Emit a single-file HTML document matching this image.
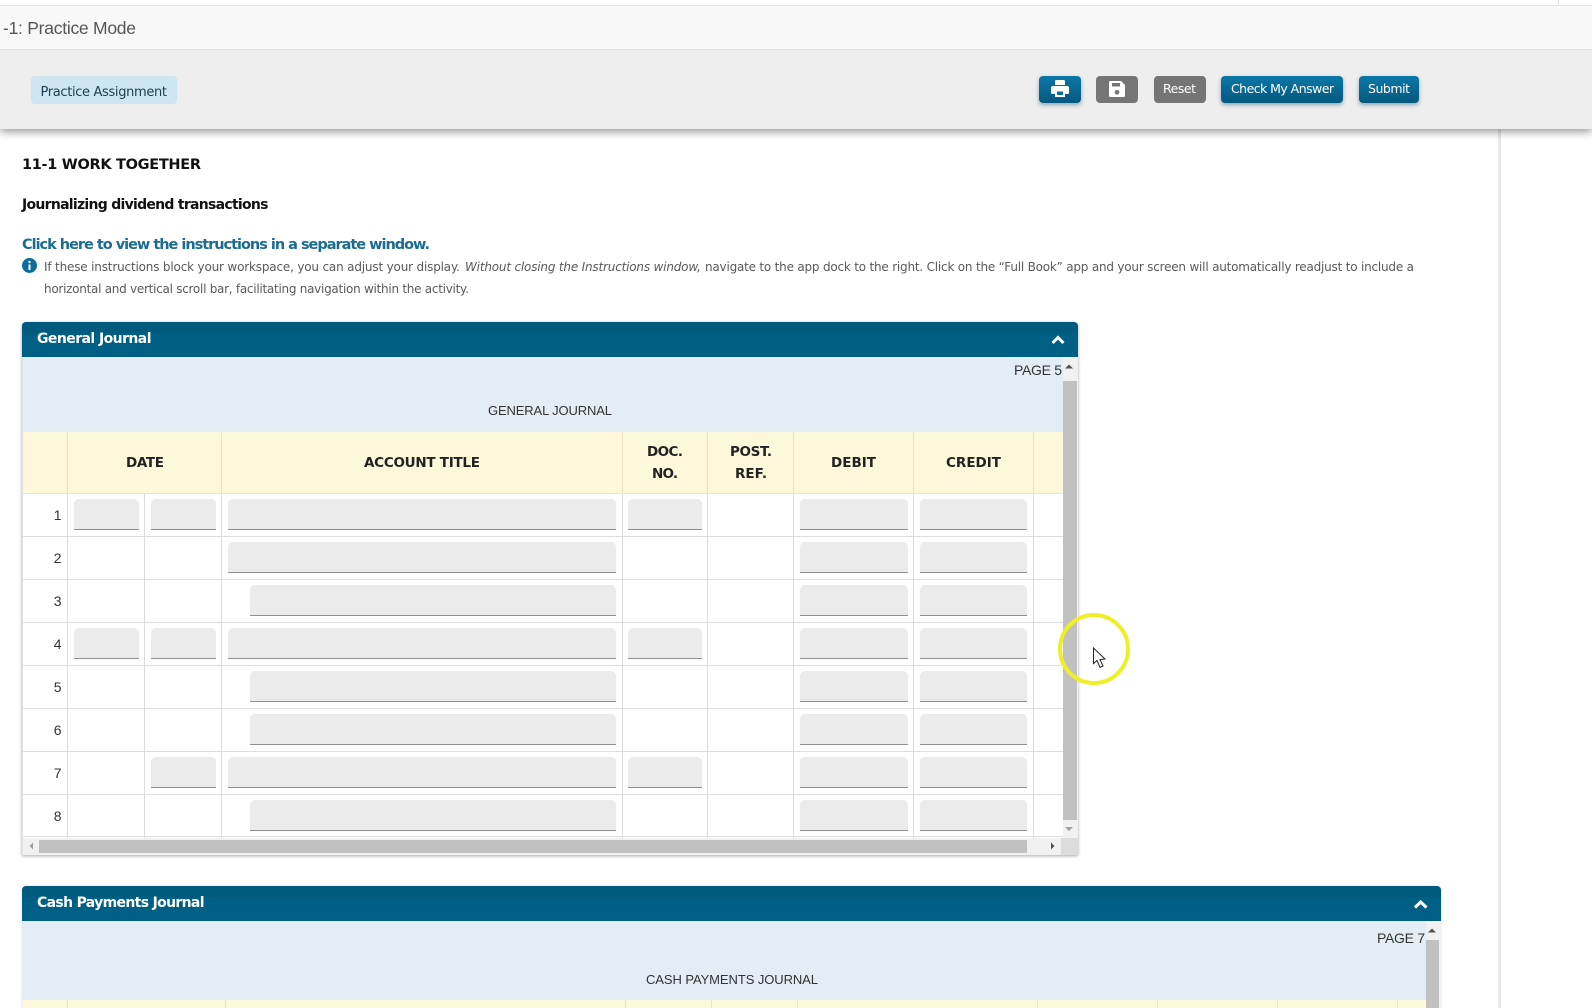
<!DOCTYPE html>
<html lang="en">
<head>
<meta charset="utf-8">
<title>Practice Mode</title>
<style>
html,body{margin:0;padding:0;width:1592px;height:1008px;overflow:hidden;background:#fff}
div{position:absolute;box-sizing:border-box}
.i{background:#ebebeb;height:31px;border-bottom:1px solid #8f8f8f;border-radius:5px 5px 0 0}
.r{height:1px;background:#dedede}
.c{width:1px;background:#dcdcdc}
.y{width:1px;background:#e9e3c2}
.b{top:76px;height:27px;border-radius:4px;background:linear-gradient(#0b78a8,#04587e);box-shadow:0 2px 4px rgba(0,60,90,.4)}
.g{top:76px;height:27px;border-radius:4px;background:#757575}
svg{position:absolute;left:0;top:0}
.s{font-family:"DejaVu Sans",sans-serif}
.sb{font-family:"DejaVu Sans",sans-serif;font-weight:bold}
.l{font-family:"Liberation Sans",sans-serif}
</style>
</head>
<body>
<!-- top bars -->
<div style="left:0;top:5px;width:1592px;height:1px;background:#e6e6e6"></div>
<div style="left:1558px;top:0;width:1px;height:6px;background:#dedede"></div>
<div style="left:0;top:50px;width:1592px;height:79px;background:#eee;box-shadow:0 3px 8px rgba(0,0,0,.4);z-index:3"></div>
<div style="left:0;top:6px;width:1592px;height:44px;background:#f8f8f8;border-bottom:1px solid #e2e2e2;z-index:4"></div>
<div style="left:31px;top:76px;width:146px;height:28px;background:#cde6f2;border-radius:4px;z-index:4"></div>
<div class="b" style="left:1039px;width:42px;z-index:4"></div>
<div class="g" style="left:1096px;width:42px;z-index:4"></div>
<div class="g" style="left:1154px;width:52px;z-index:4"></div>
<div class="b" style="left:1221px;width:122px;z-index:4"></div>
<div class="b" style="left:1359px;width:60px;z-index:4"></div>
<!-- right page edge -->
<div style="left:1498px;top:129px;width:3px;height:879px;background:#e8e8e8"></div>
<!-- General Journal panel -->
<div style="left:22px;top:322px;width:1056px;height:533px;background:#fff;box-shadow:0 1px 3px rgba(0,0,0,.35);border-radius:4px 4px 0 0"></div>
<div style="left:22px;top:322px;width:1056px;height:35px;background:linear-gradient(#005a7e 0,#005a7e 11px,#005f85 11px);border-radius:4px 4px 0 0"></div>
<div style="left:22px;top:357px;width:1041px;height:75px;background:#e2edf6"></div>
<div style="left:23px;top:432px;width:1040px;height:62px;background:#fdf8d9;border-bottom:1px solid #ece8d0"></div>
<div style="left:22px;top:357px;width:1px;height:498px;background:#e2e2e2"></div>
<div class="y" style="left:67px;top:432px;height:61px"></div>
<div class="y" style="left:221px;top:432px;height:61px"></div>
<div class="y" style="left:622px;top:432px;height:61px"></div>
<div class="y" style="left:707px;top:432px;height:61px"></div>
<div class="y" style="left:793px;top:432px;height:61px"></div>
<div class="y" style="left:913px;top:432px;height:61px"></div>
<div class="y" style="left:1033px;top:432px;height:61px"></div>
<div class="c" style="left:67px;top:494px;height:346px"></div>
<div class="c" style="left:144px;top:494px;height:346px"></div>
<div class="c" style="left:221px;top:494px;height:346px"></div>
<div class="c" style="left:622px;top:494px;height:346px"></div>
<div class="c" style="left:707px;top:494px;height:346px"></div>
<div class="c" style="left:793px;top:494px;height:346px"></div>
<div class="c" style="left:913px;top:494px;height:346px"></div>
<div class="c" style="left:1033px;top:494px;height:346px"></div>
<div class="r" style="left:23px;top:536px;width:1040px"></div>
<div class="r" style="left:23px;top:579px;width:1040px"></div>
<div class="r" style="left:23px;top:622px;width:1040px"></div>
<div class="r" style="left:23px;top:665px;width:1040px"></div>
<div class="r" style="left:23px;top:708px;width:1040px"></div>
<div class="r" style="left:23px;top:751px;width:1040px"></div>
<div class="r" style="left:23px;top:794px;width:1040px"></div>
<div class="r" style="left:23px;top:836px;width:1040px"></div>
<!-- row 1 -->
<div class="i" style="left:74px;top:499px;width:65px"></div>
<div class="i" style="left:151px;top:499px;width:65px"></div>
<div class="i" style="left:228px;top:499px;width:388px"></div>
<div class="i" style="left:628px;top:499px;width:74px"></div>
<div class="i" style="left:800px;top:499px;width:108px"></div>
<div class="i" style="left:920px;top:499px;width:107px"></div>
<!-- row 2 -->
<div class="i" style="left:228px;top:542px;width:388px"></div>
<div class="i" style="left:800px;top:542px;width:108px"></div>
<div class="i" style="left:920px;top:542px;width:107px"></div>
<!-- row 3 -->
<div class="i" style="left:250px;top:585px;width:366px"></div>
<div class="i" style="left:800px;top:585px;width:108px"></div>
<div class="i" style="left:920px;top:585px;width:107px"></div>
<!-- row 4 -->
<div class="i" style="left:74px;top:628px;width:65px"></div>
<div class="i" style="left:151px;top:628px;width:65px"></div>
<div class="i" style="left:228px;top:628px;width:388px"></div>
<div class="i" style="left:628px;top:628px;width:74px"></div>
<div class="i" style="left:800px;top:628px;width:108px"></div>
<div class="i" style="left:920px;top:628px;width:107px"></div>
<!-- row 5 -->
<div class="i" style="left:250px;top:671px;width:366px"></div>
<div class="i" style="left:800px;top:671px;width:108px"></div>
<div class="i" style="left:920px;top:671px;width:107px"></div>
<!-- row 6 -->
<div class="i" style="left:250px;top:714px;width:366px"></div>
<div class="i" style="left:800px;top:714px;width:108px"></div>
<div class="i" style="left:920px;top:714px;width:107px"></div>
<!-- row 7 -->
<div class="i" style="left:151px;top:757px;width:65px"></div>
<div class="i" style="left:228px;top:757px;width:388px"></div>
<div class="i" style="left:628px;top:757px;width:74px"></div>
<div class="i" style="left:800px;top:757px;width:108px"></div>
<div class="i" style="left:920px;top:757px;width:107px"></div>
<!-- row 8 -->
<div class="i" style="left:250px;top:800px;width:366px"></div>
<div class="i" style="left:800px;top:800px;width:108px"></div>
<div class="i" style="left:920px;top:800px;width:107px"></div>
<!-- scrollbars -->
<div style="left:1063px;top:357px;width:15px;height:498px;background:#f1f1f1"></div>
<div style="left:1063px;top:381px;width:13.500px;height:439px;background:#c1c1c1"></div>
<div style="left:23px;top:838px;width:1040px;height:17px;background:#f1f1f1"></div>
<div style="left:39px;top:840px;width:988px;height:13px;background:#c1c1c1"></div>
<div style="left:1061px;top:838px;width:17px;height:17px;background:#dcdcdc"></div>
<!-- Cash Payments panel -->
<div style="left:22px;top:886px;width:1419px;height:122px;background:#f1f1f1;box-shadow:0 0 3px rgba(0,0,0,.12);border-radius:4px 4px 0 0"></div>
<div style="left:22px;top:886px;width:1419px;height:35px;background:linear-gradient(#005a7e 0,#005a7e 11px,#005f85 11px);border-radius:4px 4px 0 0"></div>
<div style="left:22px;top:921px;width:1404px;height:79px;background:#e2edf6"></div>
<div style="left:23px;top:1000px;width:1403px;height:8px;background:#fdf8d9"></div>
<div class="y" style="left:67px;top:1000px;height:8px"></div>
<div class="y" style="left:225px;top:1000px;height:8px"></div>
<div class="y" style="left:625px;top:1000px;height:8px"></div>
<div class="y" style="left:711px;top:1000px;height:8px"></div>
<div class="y" style="left:797px;top:1000px;height:8px"></div>
<div class="y" style="left:1037px;top:1000px;height:8px"></div>
<div class="y" style="left:1157px;top:1000px;height:8px"></div>
<div class="y" style="left:1277px;top:1000px;height:8px"></div>
<div class="y" style="left:1397px;top:1000px;height:8px"></div>
<div style="left:1426px;top:940px;width:13px;height:68px;background:#c1c1c1"></div>

<svg width="1592" height="1008" viewBox="0 0 1592 1008" style="z-index:5">
<!-- toolbar text -->
<text class="l" x="3" y="34" font-size="17.500" fill="#555" textLength="133">-1: Practice Mode</text>
<text class="s" x="40.500" y="96" font-size="13" fill="#1d3d4d" textLength="126.500">Practice Assignment</text>
<text class="s" x="1163" y="93" font-size="12.500" fill="#fff" textLength="33">Reset</text>
<text class="s" x="1231" y="93" font-size="12.500" fill="#fff" textLength="103">Check My Answer</text>
<text class="s" x="1368" y="93" font-size="12.500" fill="#fff" textLength="42">Submit</text>
<!-- printer icon -->
<path fill="#fff" d="M1055 85V81.500q0-1.500 1.500-1.500h7q1.500 0 1.500 1.500V85zM1053 86h14q2 0 2 2v5q0 1-1 1h-3v3h-10v-3h-3q-1 0-1-1v-5q0-2 2-2z"/>
<path fill="#0a6f9e" d="M1057 91.500h6v3.500h-6z"/>
<!-- floppy icon -->
<path fill="#fff" fill-rule="evenodd" d="M1110.500 81h10.500l4 4v10.500q0 1.500-1.500 1.500h-13q-1.500 0-1.500-1.500v-13q0-1.500 1.500-1.500zM1112 83v3.500h8V83zM1117 90a2.300 2.300 0 1 0 .01 0z"/>
</svg>

<svg width="1592" height="1008" viewBox="0 0 1592 1008" style="z-index:2">
<!-- headings -->
<text class="sb" x="22" y="169" font-size="14.500" fill="#111" textLength="179">11-1 WORK TOGETHER</text>
<text class="sb" x="22" y="209" font-size="14" fill="#111" textLength="246.500">Journalizing dividend transactions</text>
<text class="sb" x="22" y="249" font-size="14.500" fill="#1a6c92" textLength="408">Click here to view the instructions in a separate window.</text>
<circle cx="29.500" cy="265.500" r="7.500" fill="#0f6d9c"/>
<circle cx="29.500" cy="262" r="1.200" fill="#fff"/>
<rect x="28.500" y="264.500" width="2" height="5.500" fill="#fff"/>
<text class="s" x="44" y="271" font-size="12" fill="#5a5a5a" textLength="416">If these instructions block your workspace, you can adjust your display.</text>
<text class="s" x="465" y="271" font-size="12" font-style="italic" fill="#5a5a5a" textLength="236">Without closing the Instructions window,</text>
<text class="s" x="705" y="271" font-size="12" fill="#5a5a5a" textLength="709">navigate to the app dock to the right. Click on the “Full Book” app and your screen will automatically readjust to include a</text>
<text class="s" x="44" y="293" font-size="12" fill="#5a5a5a" textLength="425">horizontal and vertical scroll bar, facilitating navigation within the activity.</text>
<!-- General Journal -->
<text class="sb" x="37" y="343" font-size="14" fill="#fff" textLength="114.500">General Journal</text>
<polyline points="1052.500,343 1058,337.500 1063.500,343" fill="none" stroke="#fff" stroke-width="3"/>
<text class="l" x="1014" y="375" font-size="14" fill="#333" textLength="48">PAGE 5</text>
<text class="l" x="488" y="415" font-size="13" fill="#333" textLength="124">GENERAL JOURNAL</text>
<text class="sb" x="126" y="467" font-size="13.500" fill="#222" textLength="38">DATE</text>
<text class="sb" x="364" y="467" font-size="13.500" fill="#222" textLength="116">ACCOUNT TITLE</text>
<text class="sb" x="647" y="456" font-size="13.500" fill="#222" textLength="36">DOC.</text>
<text class="sb" x="652" y="478" font-size="13.500" fill="#222" textLength="26">NO.</text>
<text class="sb" x="730" y="456" font-size="13.500" fill="#222" textLength="42">POST.</text>
<text class="sb" x="735" y="478" font-size="13.500" fill="#222" textLength="32">REF.</text>
<text class="sb" x="831" y="467" font-size="13.500" fill="#222" textLength="45">DEBIT</text>
<text class="sb" x="946" y="467" font-size="13.500" fill="#222" textLength="55">CREDIT</text>
<g class="l" font-size="14" fill="#333" text-anchor="end">
<text x="61.500" y="520">1</text><text x="61.500" y="563">2</text><text x="61.500" y="606">3</text><text x="61.500" y="649">4</text>
<text x="61.500" y="692">5</text><text x="61.500" y="735">6</text><text x="61.500" y="778">7</text><text x="61.500" y="821">8</text>
</g>
<!-- scroll arrows -->
<path fill="#505050" d="M1065 368.500l4-4 4 4z"/>
<path fill="#a0a0a0" d="M1065 827h8l-4 4z"/>
<path fill="#a0a0a0" d="M33 842.500v7l-3.500-3.500z"/>
<path fill="#505050" d="M1051 842.500v7l3.500-3.500z"/>
<!-- Cash Payments -->
<text class="sb" x="37" y="907" font-size="14" fill="#fff" textLength="167.500">Cash Payments Journal</text>
<polyline points="1415,907.500 1420.700,902 1426.500,907.500" fill="none" stroke="#fff" stroke-width="3"/>
<text class="l" x="1377" y="943" font-size="14" fill="#333" textLength="48">PAGE 7</text>
<text class="l" x="646" y="984" font-size="13" fill="#333" textLength="172">CASH PAYMENTS JOURNAL</text>
<path fill="#505050" d="M1428 932.500l4-4 4 4z"/>
<!-- cursor highlight -->
<circle cx="1094" cy="649" r="34" fill="none" stroke="#efef28" stroke-width="4"/>
<path fill="#fff" stroke="#222" stroke-width="1" d="M1093.500 648V663.500L1097 660.500 1100 667.500 1103 666 1100 659.500 1105 659z"/>
</svg>
</body>
</html>
